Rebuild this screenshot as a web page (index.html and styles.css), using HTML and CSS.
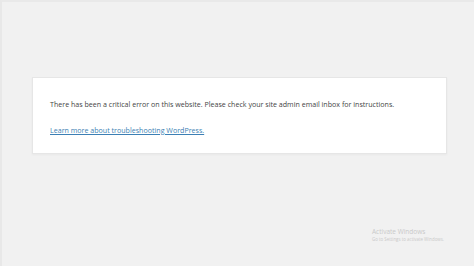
FILE: index.html
```html
<!DOCTYPE html>
<html lang="en">
<head>
    <meta charset="UTF-8">
    <meta name="viewport" content="width=device-width, initial-scale=1.0">
    <title>WordPress &rsaquo; Error</title>
    <link rel="stylesheet" href="styles.css">
</head>
<body>
    <div class="screen">
        <div class="error-page">
            <div class="wp-die-message">
                <p>There has been a critical error on this website. Please check your site admin email inbox for instructions.</p>
                <p><a href="#">Learn more about troubleshooting WordPress.</a></p>
            </div>
        </div>
        <div class="watermark">
            <div class="wm-title">Activate Windows</div>
            <div class="wm-sub">Go to Settings to activate Windows.</div>
        </div>
    </div>
</body>
</html>
```

FILE: styles.css
```css
html, body {
    margin: 0;
    padding: 0;
    height: 100%;
}

body {
    background: #f1f1f1;
    font-family: "Open Sans", "Liberation Sans", sans-serif;
}

.screen {
    height: 266px;
    display: flex;
    flex-direction: column;
    box-sizing: border-box;
    border-left: 2px solid #e8e8e8;
    border-top: 2px solid #e9e9e9;
}

.error-page {
    padding: 75px 27px 0 30px;
}

.wp-die-message {
    background: #fff;
    border: 1px solid #e6e6e6;
    box-shadow: 0 1px 2px rgba(0, 0, 0, 0.04);
    padding: 20px 17px 17px 17px;
    color: #444;
    font-size: 7.1px;
    line-height: 12px;
}

.wp-die-message p {
    margin: 0;
}

.wp-die-message p + p {
    margin-top: 14px;
}

.wp-die-message a {
    color: #3c7fb4;
    text-decoration: underline;
}

.watermark {
    margin-top: auto;
    margin-bottom: 24px;
    padding-left: 370px;
    color: #c9c9c9;
}

.wm-title {
    font-size: 6.5px;
    line-height: 8px;
}

.wm-sub {
    font-size: 4.4px;
    line-height: 6px;
}
```
